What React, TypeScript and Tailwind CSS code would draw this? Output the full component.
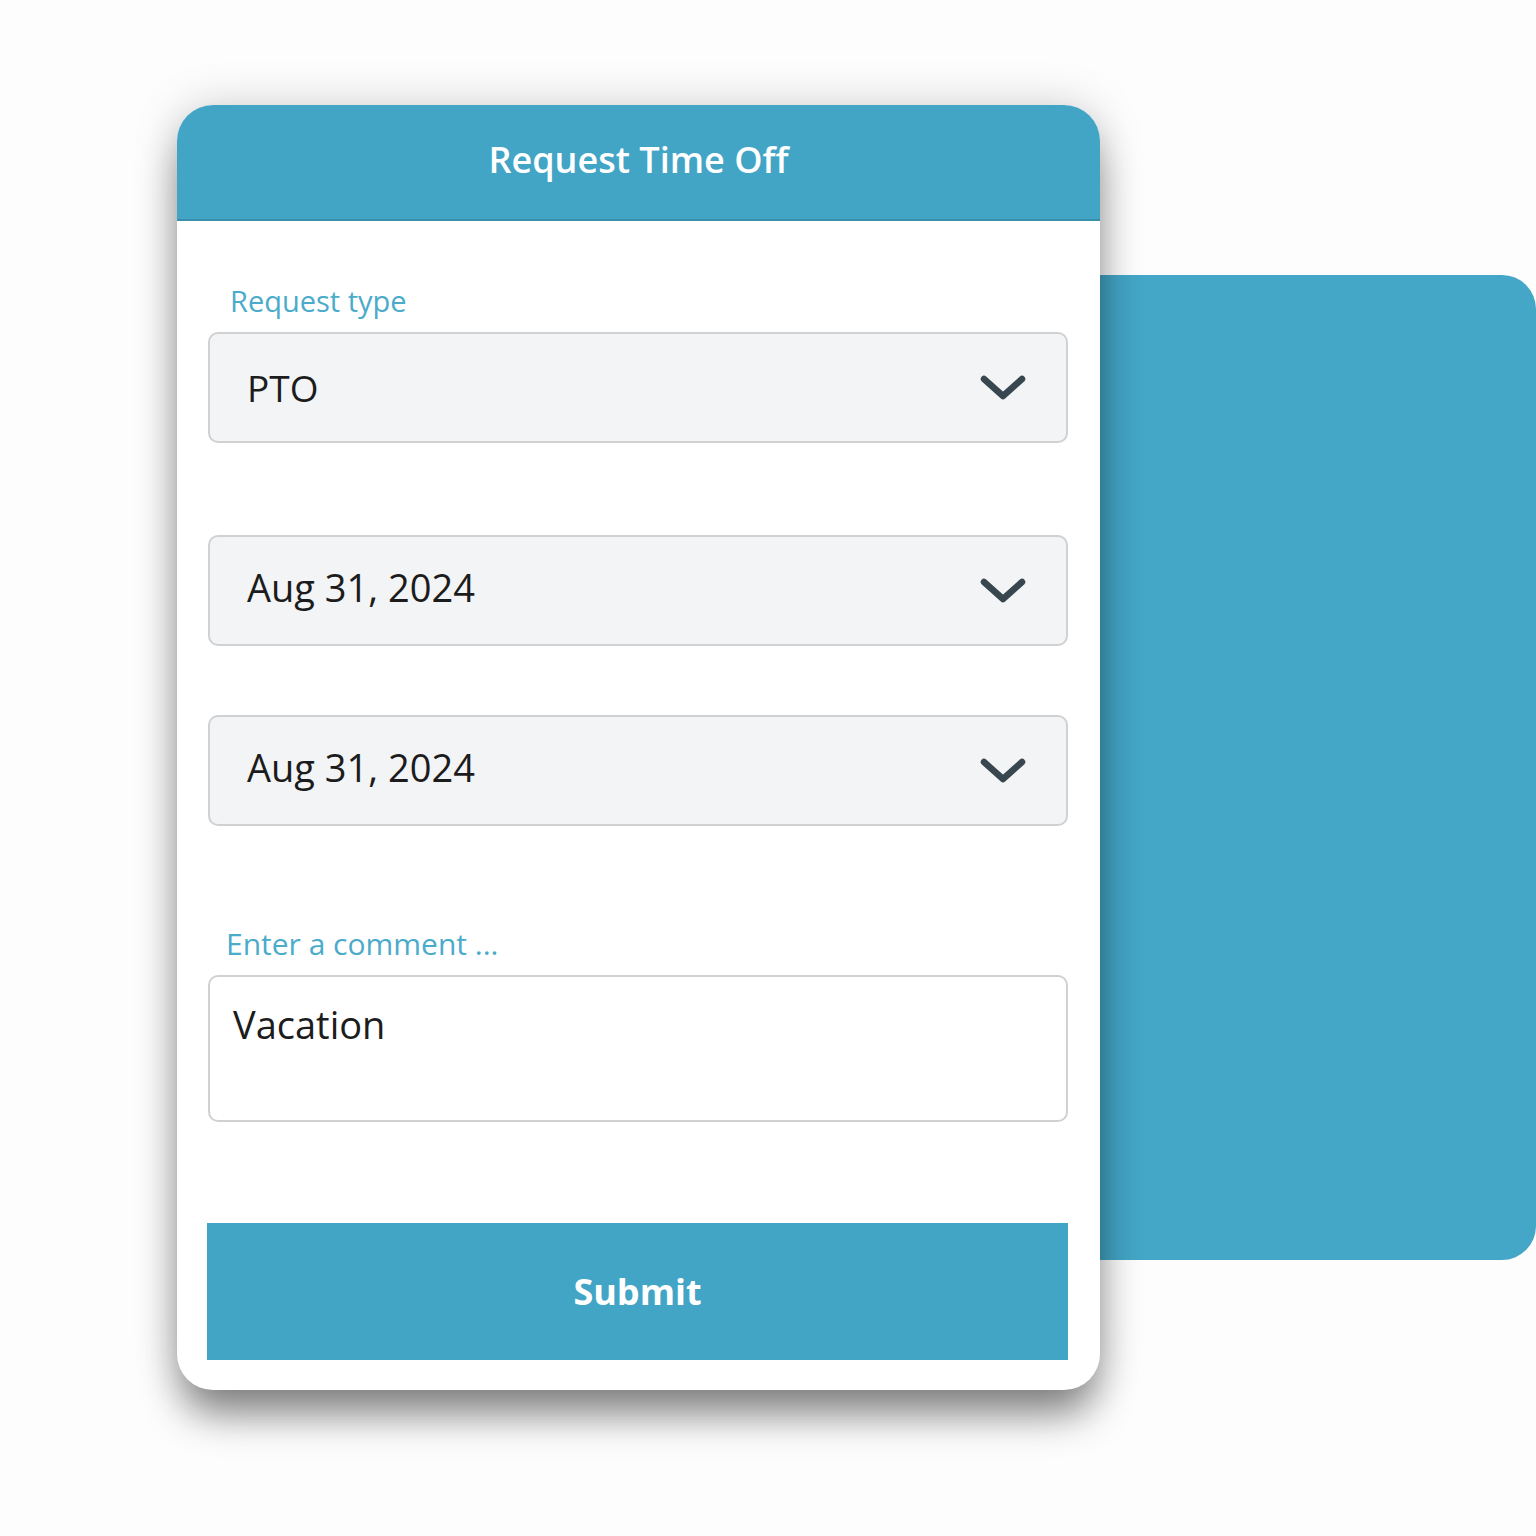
import React from "react";

const Chevron = () => (
  <svg width="46" height="28" viewBox="0 0 46 28" fill="none" className="shrink-0">
    <path d="M4 5 L23 22 L42 5" stroke="#38474f" strokeWidth="6.5" strokeLinecap="round" strokeLinejoin="round" />
  </svg>
);

const SelectField = ({ value, className = "", textClass = "" }: { value: string; className?: string; textClass?: string }) => (
  <div
    className={`h-[111px] rounded-[10px] border-2 border-[#cfd1d3] bg-[#f3f4f6] flex items-center justify-between pl-[37px] pr-[40px] ${className}`}
  >
    <span className={`text-[#1c1c1c] leading-none ${textClass}`}>{value}</span>
    <Chevron />
  </div>
);

export default function App() {
  return (
    <div
      className="relative w-[1536px] h-[1536px] bg-[#fdfdfd] overflow-hidden"
      style={{ fontFamily: '"Open Sans", "Noto Sans", sans-serif' }}
    >
      {/* background panel behind the card */}
      <div className="absolute left-[1000px] top-[275px] w-[536px] h-[985px] bg-[#44a7c7] rounded-r-[34px]" />

      <div className="relative pt-[105px] pl-[177px]">
        <div className="w-[923px] h-[1285px] bg-white rounded-[36px] overflow-hidden flex flex-col shadow-[0_30px_40px_-6px_rgba(0,0,0,0.45),0_0_45px_rgba(0,0,0,0.18)]">
          <div className="h-[116px] shrink-0 bg-[#42a5c6] border-b-2 border-[#3890ad] flex items-center justify-center">
            <span className="text-[36px] text-white font-semibold leading-none -mt-[4px]">Request Time Off</span>
          </div>

          <div className="flex flex-col pl-[31px] pr-[32px]">
            <div className="mt-[61px] pl-[22px] text-[29px] leading-[38px] text-[#4aabcb]">Request type</div>
            <SelectField value="PTO" className="mt-[12px]" textClass="text-[37px]" />
            <SelectField value="Aug 31, 2024" className="mt-[92px]" textClass="text-[38px] mb-[8px]" />
            <SelectField value="Aug 31, 2024" className="mt-[69px]" textClass="text-[38px] mb-[8px]" />

            <div className="mt-[99px] pl-[18px] text-[30px] leading-[38px] text-[#4aabcb]">Enter a comment ...</div>
            <div className="mt-[12px] h-[147px] rounded-[10px] border-2 border-[#cfd1d3] bg-white pl-[23px] pt-[28px]">
              <span className="text-[38px] text-[#1c1c1c] leading-none">Vacation</span>
            </div>

            <div className="mt-[101px] h-[137px] bg-[#42a5c6] flex items-center justify-center -ml-px">
              <span className="text-[36px] font-bold text-white leading-none">Submit</span>
            </div>
          </div>
        </div>
      </div>
    </div>
  );
}
